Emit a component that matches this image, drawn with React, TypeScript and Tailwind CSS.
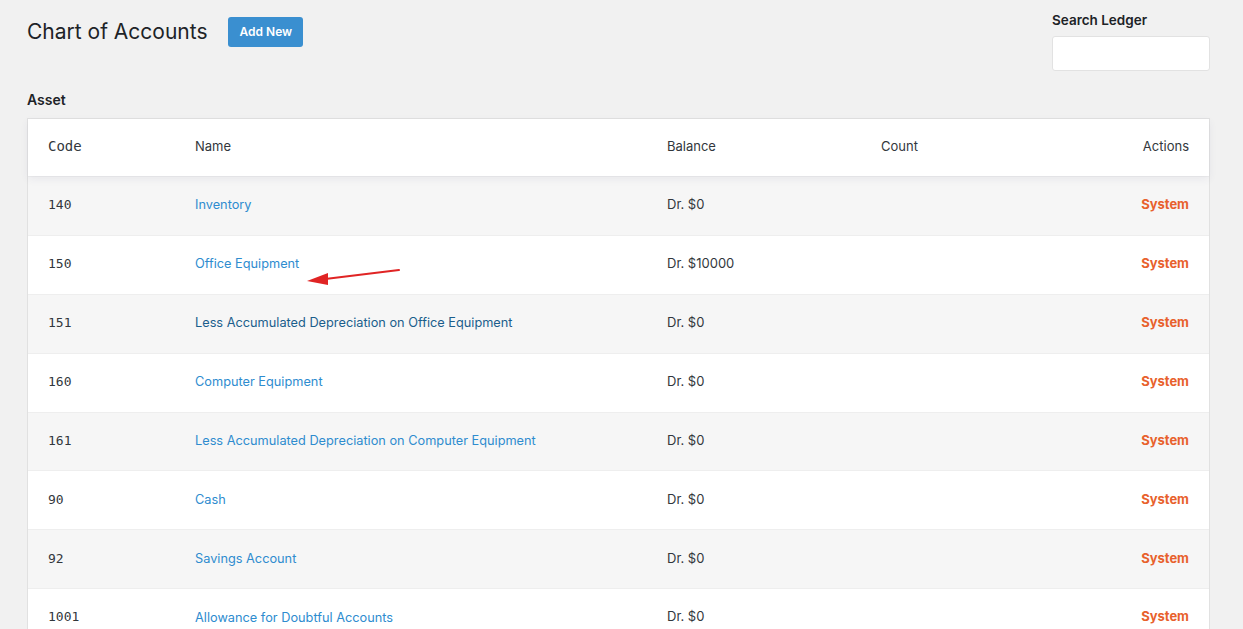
import React from "react";

type Account = {
  code: string;
  name: string;
  balance: string;
  visited?: boolean;
};

const accounts: Account[] = [
  { code: "140", name: "Inventory", balance: "Dr. $0" },
  { code: "150", name: "Office Equipment", balance: "Dr. $10000" },
  { code: "151", name: "Less Accumulated Depreciation on Office Equipment", balance: "Dr. $0", visited: true },
  { code: "160", name: "Computer Equipment", balance: "Dr. $0" },
  { code: "161", name: "Less Accumulated Depreciation on Computer Equipment", balance: "Dr. $0" },
  { code: "90", name: "Cash", balance: "Dr. $0" },
  { code: "92", name: "Savings Account", balance: "Dr. $0" },
  { code: "1001", name: "Allowance for Doubtful Accounts", balance: "Dr. $0" },
];

function Arrow() {
  return (
    <svg
      className="absolute left-[110px] top-[14px]"
      width="96"
      height="18"
      viewBox="0 0 96 18"
    >
      <line x1="94" y1="2" x2="12" y2="12" stroke="#e02424" strokeWidth="2" strokeLinecap="round" />
      <polygon points="2,13 23,5 23,17" fill="#e02424" />
    </svg>
  );
}

function App() {
  return (
    <div
      className="min-h-screen bg-[#f1f1f1] text-[#23282d] px-[27px] overflow-hidden h-[629px]"
      style={{ fontFamily: "Inter, 'Noto Sans', 'Liberation Sans', sans-serif" }}
    >
      {/* top bar */}
      <div className="flex justify-between items-start">
        <div className="flex items-center pt-[17px]">
          <h1 className="text-[21px] font-normal text-[#1d2327] leading-[30px]">Chart of Accounts</h1>
          <button className="ml-[21px] bg-[#3a8fd0] text-white text-[12px] font-semibold rounded-[3px] h-[30px] px-[11px]">
            Add New
          </button>
        </div>
        <div className="pt-[11px] w-[158px] mr-[6px]">
          <label className="block text-[13.5px] font-semibold text-[#1d2327] leading-[18px]">Search Ledger</label>
          <input
            type="text"
            className="mt-[7px] block w-full h-[35px] bg-white border border-[#e2e2e2] rounded-[3px]"
          />
        </div>
      </div>

      <h2 className="mt-[19px] text-[14px] font-semibold text-[#1d2327] leading-[20px]">Asset</h2>

      {/* table */}
      <div className="mt-[8px] mr-[6px] bg-white border border-[#e1e1e1]">
        <div className="flex items-center h-[57px] px-[20px] pb-[2px] text-[13px] text-[#32373c] bg-white shadow-[0_3px_8px_rgba(60,70,120,0.08)] relative z-10">
          <div
            className="w-[147px] text-[14px]"
            style={{ fontFamily: "'DejaVu Sans Mono', 'Liberation Mono', monospace" }}
          >
            Code
          </div>
          <div className="w-[472px]">Name</div>
          <div className="w-[214px]">Balance</div>
          <div className="flex-1">Count</div>
          <div className="text-right">Actions</div>
        </div>
        {accounts.map((a, i) => (
          <div
            key={a.code}
            className={`flex items-center h-[58.9px] px-[20px] pb-[2px] text-[13px] border-t border-[#eeeeee] ${
              i % 2 === 0 ? "bg-[#f6f6f6]" : "bg-white"
            }`}
          >
            <div
              className="w-[147px] text-[#32373c]"
              style={{ fontFamily: "'DejaVu Sans Mono', 'Liberation Mono', monospace" }}
            >
              {a.code}
            </div>
            <div className="w-[472px] relative text-[12.75px]">
              <a className={a.visited ? "text-[#1b5e8c]" : "text-[#2e8ccf]"}>{a.name}</a>
              {a.code === "150" && <Arrow />}
            </div>
            <div className="w-[214px] text-[#32373c]">{a.balance}</div>
            <div className="flex-1"></div>
            <div className="text-right text-[#e8612c] font-bold">System</div>
          </div>
        ))}
      </div>
    </div>
  );
}

export default App;
